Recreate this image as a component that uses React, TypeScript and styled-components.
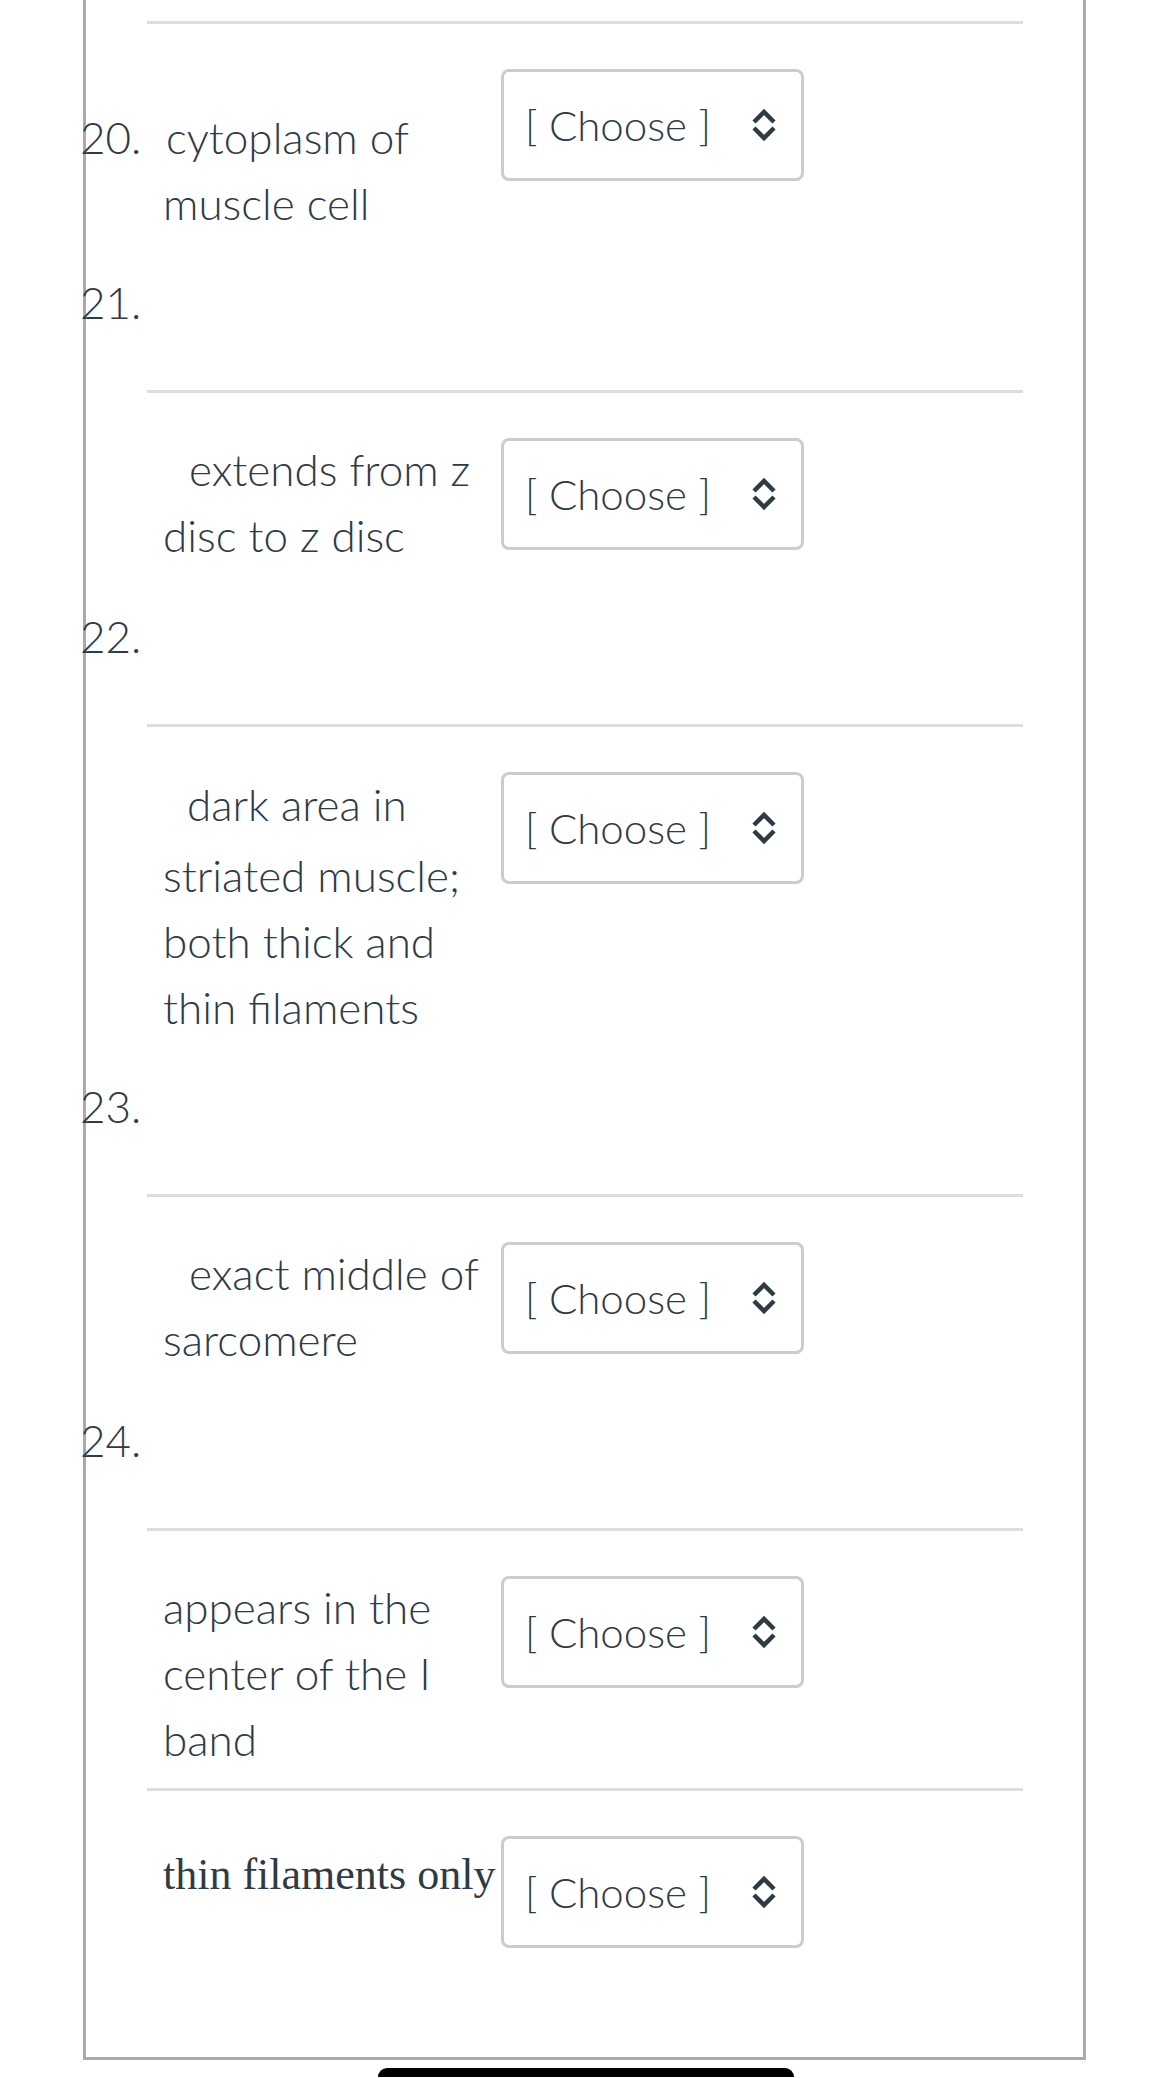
import React from 'react';
import styled, { createGlobalStyle } from 'styled-components';

const GlobalStyle = createGlobalStyle`
  html, body {
    margin: 0;
    padding: 0;
    background: #fff;
    overflow: hidden;
  }
  body {
    font-family: Lato, 'Noto Sans', sans-serif;
    font-weight: 300;
    color: #2d3b45;
  }
`;

const Page = styled.div`
  width: 1170px;
  height: 2078px;
  overflow: hidden;
`;

// the question panel, its top runs off screen
const QuizBox = styled.div`
  margin-left: 83px;
  width: 1003px;
  box-sizing: border-box;
  border: 3px solid #aaa;
  border-top: none;
  padding: 21px 0 95px;
`;

const Rule = styled.hr`
  margin: 0 60px 0 61px;
  border: 0;
  height: 3px;
  background: #ddd;
`;

const Row = styled.div`
  display: grid;
  grid-template-columns: 415px 303px;
  column-gap: 6px;
  align-items: start;
  margin: 45px 0 0 -6px;
  padding-bottom: 14px;
`;

const Label = styled.div<{ $offset?: number }>`
  display: flex;
  margin-top: ${p => p.$offset ?? -2}px;
  margin-bottom: ${p => (p.$offset === undefined ? 2 : 0)}px;
  font-size: 44px;
  line-height: 66px;
`;

const Marker = styled.span`
  flex: 0 0 83px;
`;

const Prompt = styled.div<{ $indent?: number; $serif?: boolean; $tallFirst?: boolean }>`
  flex: 1;
  text-indent: ${p => p.$indent || 0}px;
  ${p =>
    p.$tallFirst &&
    `
    &::first-line { line-height: 76px; }
  `}
  ${p =>
    p.$serif &&
    `
    font-family: 'Liberation Serif', 'Times New Roman', serif;
    font-weight: 400;
    font-size: 44px;
    white-space: nowrap;
  `}
`;

const NumberLine = styled.div`
  margin: 19px 0 55px -6px;
  font-size: 44px;
  line-height: 66px;
`;

const SelectBox = styled.div`
  box-sizing: border-box;
  height: 112px;
  display: flex;
  align-items: center;
  justify-content: space-between;
  padding: 0 24px 0 21px;
  border: 3px solid #ccc;
  border-radius: 8px;
  background: #fff;
  font-size: 42px;
  color: #2d3b45;
  cursor: pointer;
`;

const HomeBar = styled.div`
  width: 416px;
  height: 9px;
  margin: 8px 0 0 378px;
  background: #000;
  border-radius: 10px 10px 0 0;
`;

const Chevrons = () => (
  <svg width="26" height="34" viewBox="0 0 26 34" fill="none">
    <polyline points="3,14 13,4 23,14" stroke="#2d3b45" strokeWidth="4.5" />
    <polyline points="3,20 13,30 23,20" stroke="#2d3b45" strokeWidth="4.5" />
  </svg>
);

const Choose = () => (
  <SelectBox role="combobox">
    <span>[ Choose ]</span>
    <Chevrons />
  </SelectBox>
);

interface Item {
  text: string;
  marker?: string;
  indent?: number;
  serif?: boolean;
  tallFirst?: boolean;
  offset?: number;
  next?: string;
}

const items: Item[] = [
  { marker: '20.', text: 'cytoplasm of muscle cell', indent: 3, offset: 35, next: '21.' },
  { text: 'extends from z disc to z disc', indent: 26, next: '22.' },
  {
    text: 'dark area in striated muscle; both thick and thin filaments',
    indent: 24,
    tallFirst: true,
    offset: -6,
    next: '23.',
  },
  { text: 'exact middle of sarcomere', indent: 26, next: '24.' },
  { text: 'appears in the center of the I band' },
  { text: 'thin filaments only', serif: true, offset: 6 },
];

export default function App() {
  return (
    <Page>
      <GlobalStyle />
      <QuizBox>
        {items.map((item, i) => (
          <React.Fragment key={i}>
            <Rule />
            <Row>
              <Label $offset={item.offset}>
                <Marker>{item.marker}</Marker>
                <Prompt $indent={item.indent} $serif={item.serif} $tallFirst={item.tallFirst}>
                  {item.text}
                </Prompt>
              </Label>
              <Choose />
            </Row>
            {item.next && <NumberLine>{item.next}</NumberLine>}
          </React.Fragment>
        ))}
      </QuizBox>
      <HomeBar />
    </Page>
  );
}
